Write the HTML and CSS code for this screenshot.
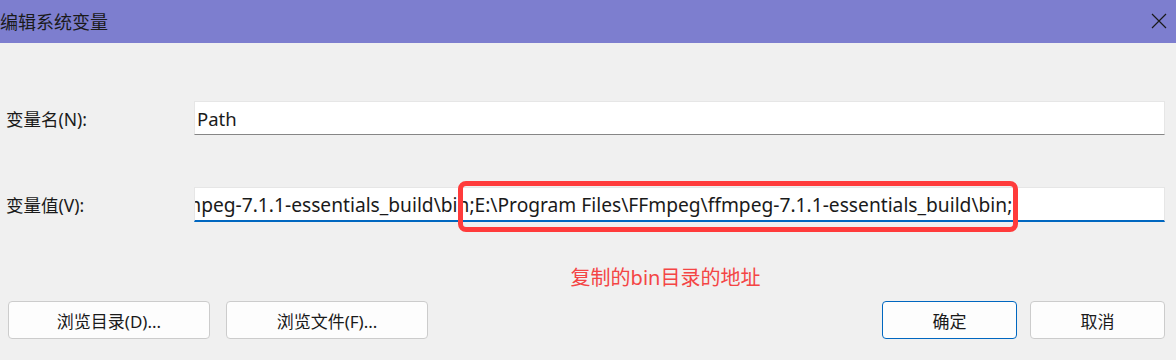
FILE: index.html
```html
<!DOCTYPE html>
<html>
<head>
  <meta charset="utf-8" />
  <title>编辑系统变量</title>
  <link rel="stylesheet" href="styles.css">
</head>
<body>
<div id="titlebar">
  <span class="title">编辑系统变量</span>
  <svg class="close" width="16" height="16" viewBox="0 0 16 16"><path d="M1 1L15 15M15 1L1 15" stroke="#1a1a1a" stroke-width="1.2" fill="none"/></svg>
</div>
<div id="main">
  <div class="row first">
    <label class="lbl">变量名(N):</label>
    <div class="field"><span class="val">Path</span></div>
  </div>
  <div class="row">
    <label class="lbl">变量值(V):</label>
    <div class="wrapfield">
      <div class="field focus">
        <span class="val scrolled">ffmpeg-7.1.1-essentials_build\bin;E:\Program Files\FFmpeg\ffmpeg-7.1.1-essentials_build\bin;</span>
      </div>
      <div class="mark"></div>
    </div>
  </div>
  <div class="note">复制的bin目录的地址</div>
  <div class="buttons">
    <div class="left">
      <button>浏览目录(D)...</button>
      <button>浏览文件(F)...</button>
    </div>
    <div class="right">
      <button class="primary">确定</button>
      <button>取消</button>
    </div>
  </div>
</div>
</body>
</html>
```
FILE: styles.css
```css
body {
  margin: 0;
  background: #f0f0f0;
  font-family: "Noto Sans", "Noto Sans CJK SC", sans-serif;
  color: #1a1a1a;
}
#titlebar {
  height: 43px;
  background: #7d7ecf;
  display: flex;
  align-items: center;
  justify-content: space-between;
  padding: 0 9px 2px 0;
  box-sizing: border-box;
}
#titlebar .title {
  font-size: 18px;
  font-family: "Noto Sans CJK SC", sans-serif;
}
#main {
  padding: 0 11px 0 6px;
}
.row {
  display: flex;
  align-items: center;
  margin-top: 52px;
}
.row.first {
  margin-top: 58px;
}
.lbl {
  width: 188px;
  font-size: 17.5px;
}
.wrapfield {
  flex: 1;
  position: relative;
}
.field {
  flex: 1;
  height: 34px;
  background: #fff;
  border: 1px solid #e6e6e6;
  border-bottom: 1px solid #868686;
  box-sizing: border-box;
  display: flex;
  align-items: center;
  overflow: hidden;
  white-space: nowrap;
}
.field.focus {
  height: 35px;
  border-bottom: 2px solid #0067c0;
}
.val {
  font-size: 18.5px;
  padding-left: 2px;
}
.val.scrolled {
  font-size: 19.2px;
  margin-left: -27px;
}
.mark {
  position: absolute;
  left: 264px;
  top: -6px;
  width: 560px;
  height: 51px;
  border: 5px solid #ff3b3b;
  border-radius: 8px;
  box-sizing: border-box;
}
.note {
  text-align: center;
  margin: 40px 0 0 160px;
  color: #f44545;
  font-size: 20px;
  height: 29px;
}
.buttons {
  display: flex;
  justify-content: space-between;
  margin-top: 10px;
  padding-left: 2px;
}
.left, .right {
  display: flex;
  gap: 16px;
}
.right {
  gap: 13px;
}
button {
  font-family: inherit;
  font-size: 17px;
  color: #1a1a1a;
  background: #fdfdfd;
  border: 1px solid #cccccc;
  border-radius: 4px;
  width: 202px;
  height: 38px;
}
.right button {
  width: 135px;
}
button.primary {
  border-color: #0067c0;
}
```
